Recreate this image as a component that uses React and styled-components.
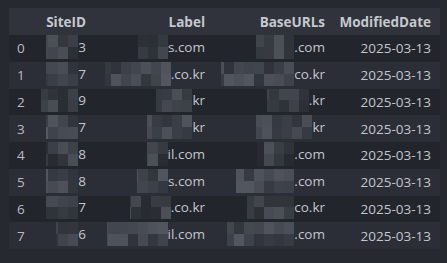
import React from "react";
import styled, { createGlobalStyle } from "styled-components";

const GlobalStyle = createGlobalStyle`
  html, body {
    margin: 0;
    background: #262930;
  }
`;

// visible tail of each value, and how wide the pixelated part before it is
const rows = [
  { site: [32, "3"], label: [30, "s.com"], base: [38, ".com"] },
  { site: [32, "7"], label: [66, ".co.kr"], base: [73, "co.kr"] },
  { site: [37, "9"], label: [36, "kr"], base: [42, ".kr"] },
  { site: [32, "7"], label: [45, "kr"], base: [56, "kr"] },
  { site: [32, "8"], label: [21, "il.com"], base: [37, ".com"] },
  { site: [32, "8"], label: [31, "s.com"], base: [58, ".com"] },
  { site: [32, "7"], label: [41, ".co.kr"], base: [47, "co.kr"] },
  { site: [22, "6"], label: [61, "il.com"], base: [67, ".com"] },
];

const seeded = (seed) => {
  let s = seed * 9301 + 49297;
  return () => {
    s = (s * 9301 + 49297) % 233280;
    return s / 233280;
  };
};

const Mosaic = ({ width, seed }) => {
  const rand = seeded(seed);
  const cols = Math.ceil(width / 10);
  const blocks = [];
  for (let r = 0; r < 2; r++) {
    for (let c = 0; c < cols; c++) {
      blocks.push(
        <rect
          key={r + "-" + c}
          x={width - (c + 1) * 10}
          y={r * 12}
          width={10}
          height={12}
          fill="#a4a9b3"
          fillOpacity={0.04 + rand() * 0.3}
        />
      );
    }
  }
  return (
    <MosaicBox width={width} height={24} viewBox={`0 0 ${width} 24`}>
      {blocks}
    </MosaicBox>
  );
};

const App = () => {
  return (
    <>
      <GlobalStyle />
      <Page>
        <Table>
          <colgroup>
            <col style={{ width: 28 }} />
            <col style={{ width: 58 }} />
            <col style={{ width: 119 }} />
            <col style={{ width: 120 }} />
            <col style={{ width: 106 }} />
          </colgroup>
          <thead>
            <tr>
              <Th />
              <Th>SiteID</Th>
              <Th>Label</Th>
              <Th>BaseURLs</Th>
              <Th>ModifiedDate</Th>
            </tr>
          </thead>
          <tbody>
            {rows.map((row, i) => (
              <Row key={i} $odd={i % 2 === 1}>
                <IndexCell>{i}</IndexCell>
                <Td>
                  <Mosaic width={row.site[0]} seed={i * 3 + 1} />
                  {row.site[1]}
                </Td>
                <Td>
                  <Mosaic width={row.label[0]} seed={i * 3 + 2} />
                  {row.label[1]}
                </Td>
                <Td>
                  <Mosaic width={row.base[0]} seed={i * 3 + 3} />
                  {row.base[1]}
                </Td>
                <Td>2025-03-13</Td>
              </Row>
            ))}
          </tbody>
        </Table>
      </Page>
    </>
  );
};

export default App;

const Page = styled.div`
  padding: 8px 7px 12px 9px;
  font-family: "Open Sans", "Noto Sans", sans-serif;
  font-size: 13.5px;
  color: #c3c6cc;
`;

const Table = styled.table`
  border-collapse: collapse;
  table-layout: fixed;
  width: 431px;
`;

const Th = styled.th`
  height: 27px;
  padding: 0 9px 0 0;
  background: #30333b;
  color: #c5c8ce;
  font-weight: 700;
  text-align: right;
  white-space: nowrap;
`;

const Row = styled.tr`
  background: ${(p) => (p.$odd ? "#2b2e36" : "#22252c")};
`;

const Td = styled.td`
  height: 26.75px;
  padding: 0 9px 0 0;
  text-align: right;
  white-space: nowrap;
  overflow: hidden;
`;

const IndexCell = styled.td`
  padding: 0 0 0 8px;
  text-align: left;
  color: #b9bcc3;
`;

const MosaicBox = styled.svg`
  display: inline-block;
  vertical-align: middle;
  margin-top: -3px;
`;
